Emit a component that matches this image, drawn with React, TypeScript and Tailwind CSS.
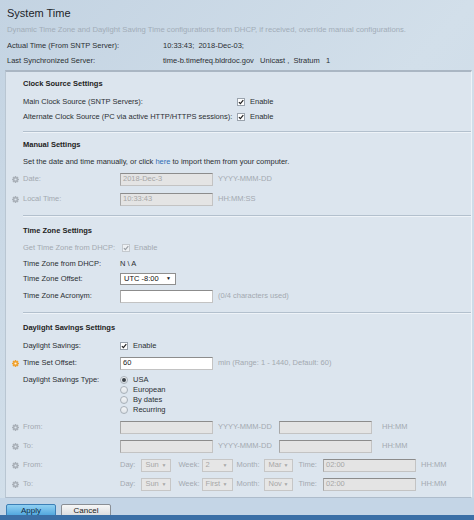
import React from 'react';

const dim = 'text-[#a3a9b0]';

function Gear({ orange = false }: { orange?: boolean }) {
  const c = orange ? '#f0a02c' : '#a9b0b8';
  return (
    <svg width="7" height="7" viewBox="0 0 14 14" className="shrink-0">
      <g fill={c}>
        <rect x="5.5" y="0" width="3" height="14" />
        <rect x="0" y="5.5" width="14" height="3" />
        <rect x="5.5" y="0" width="3" height="14" transform="rotate(45 7 7)" />
        <rect x="5.5" y="0" width="3" height="14" transform="rotate(-45 7 7)" />
        <circle cx="7" cy="7" r="5" />
      </g>
      <circle cx="7" cy="7" r="2.2" fill={orange ? '#fff4dc' : '#dde6ef'} />
    </svg>
  );
}

function Check({ disabled = false }: { disabled?: boolean }) {
  return (
    <span className={`w-[8px] h-[8px] border ${disabled ? 'border-[#c4c9ce] bg-[#eef1f4]' : 'border-[#9aa3ad] bg-white'} flex items-center justify-center shrink-0`}>
      <svg width="6" height="6" viewBox="0 0 10 10">
        <path d="M1.5 5.2 L4 7.8 L8.8 1.8" fill="none" stroke={disabled ? '#9aa0a6' : '#222'} strokeWidth="2" />
      </svg>
    </span>
  );
}

function Radio({ on = false }: { on?: boolean }) {
  return (
    <span className="w-[8px] h-[8px] rounded-full border border-[#a8b0b8] bg-gradient-to-b from-[#f4f6f8] to-[#dde2e7] flex items-center justify-center shrink-0">
      {on && <span className="w-[4px] h-[4px] rounded-full bg-[#3a4148]" />}
    </span>
  );
}

function Field({ value = '', disabled = false, cls = '' }: { value?: string; disabled?: boolean; cls?: string }) {
  return (
    <div
      className={`w-[93px] h-[13px] shrink-0 border border-[#c3c3c3] border-t-[#8c8c8c] border-l-[#a8a8a8] flex items-center px-[2px] ${
        disabled ? 'bg-[#e4e4e4] text-[#a6a6a6]' : 'bg-white text-[#222]'
      } ${cls}`}
    >
      {value}
    </div>
  );
}

function Pick({ w, value, disabled = true, cls = '' }: { w: string; value: string; disabled?: boolean; cls?: string }) {
  return (
    <div
      className={`${w} shrink-0 border flex items-center justify-between pl-[3px] pr-[4px] ${
        disabled ? 'h-[13px] border-[#c6c6c6] bg-[#e6e6e6] text-[#a6a6a6]' : 'h-[12px] border-[#8f8f8f] bg-white text-[#111]'
      } ${cls}`}
    >
      <span>{value}</span>
      <span className="text-[5px]">▼</span>
    </div>
  );
}

function Row({ label, gear, orange, muted, mt, h = 'h-[16px]', children }: {
  label: string; gear?: boolean; orange?: boolean; muted?: boolean; mt?: string; h?: string; children?: React.ReactNode;
}) {
  return (
    <div className={`flex items-center whitespace-nowrap ${h} ${mt ?? ''}`}>
      <div className={`w-[114px] pl-[6px] flex items-center gap-[4px] shrink-0 ${muted ? dim : 'text-[#2b2f33]'}`}>
        <span className="w-[7px] flex">{gear && <Gear orange={orange} />}</span>
        <span>{label}</span>
      </div>
      <div className="flex items-center">{children}</div>
    </div>
  );
}

function Heading({ text, mt }: { text: string; mt: string }) {
  return <div className={`h-[14px] flex items-center pl-[17px] font-bold text-[#222] ${mt}`}>{text}</div>;
}

function Rule({ mt }: { mt: string }) {
  return <div className={`ml-[17px] h-[2px] border-t border-[#b3c0cd] border-b border-b-[#eef3f8] ${mt}`} />;
}

// recurring-rule row: Day / Week / Month / Time
function RecurRow({ label, week, month }: { label: string; week: string; month: string }) {
  return (
    <Row label={label} gear muted mt="mt-[3px]">
      <span className={dim}>Day:</span>
      <Pick w="w-[30px]" value="Sun" cls="ml-[6px]" />
      <span className={`${dim} ml-[7px]`}>Week:</span>
      <Pick w="w-[31px]" value={week} cls="ml-[2px]" />
      <span className={`${dim} ml-[4px]`}>Month:</span>
      <Pick w="w-[29px]" value={month} cls="ml-[5px]" />
      <span className={`${dim} ml-[5px]`}>Time:</span>
      <Field value="02:00" disabled cls="ml-[6px]" />
      <span className={`${dim} ml-[5px]`}>HH:MM</span>
    </Row>
  );
}

export default function App() {
  return (
    <div className="w-[474px] h-[520px] overflow-hidden flex flex-col bg-gradient-to-br from-[#c3d3e2] via-[#d2dfea] to-[#c9d8e6] font-['Liberation_Sans',Arial,sans-serif] text-[7.5px] leading-none whitespace-nowrap">
      <div className="px-[7px] pt-[7px] h-[70px] shrink-0">
        <div className="text-[11px] text-[#1d2429] h-[13px] flex items-center">System Time</div>
        <div className="mt-[5px] text-[7.7px] text-[#a2adb8] h-[10px] flex items-center">
          Dynamic Time Zone and Daylight Saving Time configurations from DHCP, if received, override manual configurations.
        </div>
        <div className="mt-[3px] flex h-[15px] items-center text-[#2b2f33]">
          <span className="w-[156px]">Actual Time (From SNTP Server):</span>
          <span>10:33:43;&nbsp; 2018-Dec-03;</span>
        </div>
        <div className="flex h-[15px] items-center text-[#2b2f33]">
          <span className="w-[156px]">Last Synchronized Server:</span>
          <span>time-b.timefreq.bldrdoc.gov&nbsp;&nbsp; Unicast ,&nbsp; Stratum&nbsp;&nbsp; 1</span>
        </div>
      </div>

      <div className="ml-[5px] mr-[2px] flex-1 bg-[#dce5ee] border-t-2 border-t-[#aab6c3] border-l border-l-[#b9c6d2] border-r border-r-[#eef3f8] border-b border-b-[#aebccb]">
        <Heading text="Clock Source Settings" mt="mt-[5px]" />
        <div className="mt-[3px] pl-[17px] text-[#2b2f33]">
          <div className="flex items-center h-[15px]">
            <span className="w-[214px]">Main Clock Source (SNTP Servers):</span>
            <Check />
            <span className="ml-[5px]">Enable</span>
          </div>
          <div className="flex items-center h-[15px]">
            <span className="w-[214px]">Alternate Clock Source (PC via active HTTP/HTTPS sessions):</span>
            <Check />
            <span className="ml-[5px]">Enable</span>
          </div>
        </div>
        <Rule mt="mt-[7px]" />

        <Heading text="Manual Settings" mt="mt-[5px]" />
        <div className="mt-[2px] h-[15px] flex items-center pl-[17px] text-[#2b2f33]">
          Set the date and time manually, or click&nbsp;<span className="text-[#2f6fb6]">here</span>&nbsp;to import them from your computer.
        </div>
        <Row label="Date:" gear muted mt="mt-[2px]">
          <Field value="2018-Dec-3" disabled />
          <span className={`${dim} ml-[5px]`}>YYYY-MMM-DD</span>
        </Row>
        <Row label="Local Time:" gear muted mt="mt-[4px]">
          <Field value="10:33:43" disabled />
          <span className={`${dim} ml-[5px]`}>HH:MM:SS</span>
        </Row>
        <Rule mt="mt-[8px]" />

        <Heading text="Time Zone Settings" mt="mt-[7px]" />
        <Row label="Get Time Zone from DHCP:" muted mt="mt-[2px]">
          <span className="ml-[2px] flex items-center gap-[4px]">
            <Check disabled />
            <span className={dim}>Enable</span>
          </span>
        </Row>
        <Row label="Time Zone from DHCP:">
          <span className="text-[#2b2f33]">N \ A</span>
        </Row>
        <Row label="Time Zone Offset:" h="h-[13px]">
          <Pick w="w-[56px]" value="UTC -8:00" disabled={false} />
        </Row>
        <Row label="Time Zone Acronym:" mt="mt-[3px]">
          <Field />
          <span className={`${dim} ml-[5px]`}>(0/4 characters used)</span>
        </Row>
        <Rule mt="mt-[8px]" />

        <Heading text="Daylight Savings Settings" mt="mt-[7px]" />
        <Row label="Daylight Savings:" mt="mt-[3px]">
          <span className="flex items-center gap-[5px]">
            <Check />
            <span className="text-[#2b2f33]">Enable</span>
          </span>
        </Row>
        <Row label="Time Set Offset:" gear orange mt="mt-[1px]">
          <Field value="60" />
          <span className={`${dim} ml-[5px]`}>min (Range: 1 - 1440, Default: 60)</span>
        </Row>
        <div className="mt-[4px] flex items-start">
          <div className="w-[114px] pl-[17px] h-[10px] flex items-center text-[#2b2f33]">Daylight Savings Type:</div>
          <div className="flex flex-col text-[#2b2f33]">
            {['USA', 'European', 'By dates', 'Recurring'].map((t, i) => (
              <div key={t} className="h-[10px] flex items-center gap-[5px]">
                <Radio on={i === 0} />
                <span>{t}</span>
              </div>
            ))}
          </div>
        </div>
        <Row label="From:" gear muted mt="mt-[4px]">
          <Field disabled />
          <span className={`${dim} ml-[5px] w-[61px]`}>YYYY-MMM-DD</span>
          <Field disabled />
          <span className={`${dim} ml-[10px]`}>HH:MM</span>
        </Row>
        <Row label="To:" gear muted mt="mt-[3px]">
          <Field disabled />
          <span className={`${dim} ml-[5px] w-[61px]`}>YYYY-MMM-DD</span>
          <Field disabled />
          <span className={`${dim} ml-[10px]`}>HH:MM</span>
        </Row>
        <RecurRow label="From:" week="2" month="Mar" />
        <RecurRow label="To:" week="First" month="Nov" />
      </div>

      <div className="h-[17px] shrink-0 bg-[#c4d5e6] flex items-start gap-[5px] pl-[6px] pt-[6px] overflow-hidden">
        <button className="w-[50px] h-[15px] shrink-0 rounded-[2px] border border-[#3d7fb6] bg-gradient-to-b from-[#8fd0f2] to-[#3e9cd8] text-[#0f2a40] text-[8px] leading-none pb-[2px]">
          Apply
        </button>
        <button className="w-[50px] h-[15px] shrink-0 rounded-[2px] border border-[#8a8f95] bg-gradient-to-b from-[#f7f7f7] to-[#d5d7da] text-[#222] text-[8px] leading-none pb-[2px]">
          Cancel
        </button>
      </div>
      <div className="h-[5px] shrink-0 bg-[#3b6fa6]" />
    </div>
  );
}
